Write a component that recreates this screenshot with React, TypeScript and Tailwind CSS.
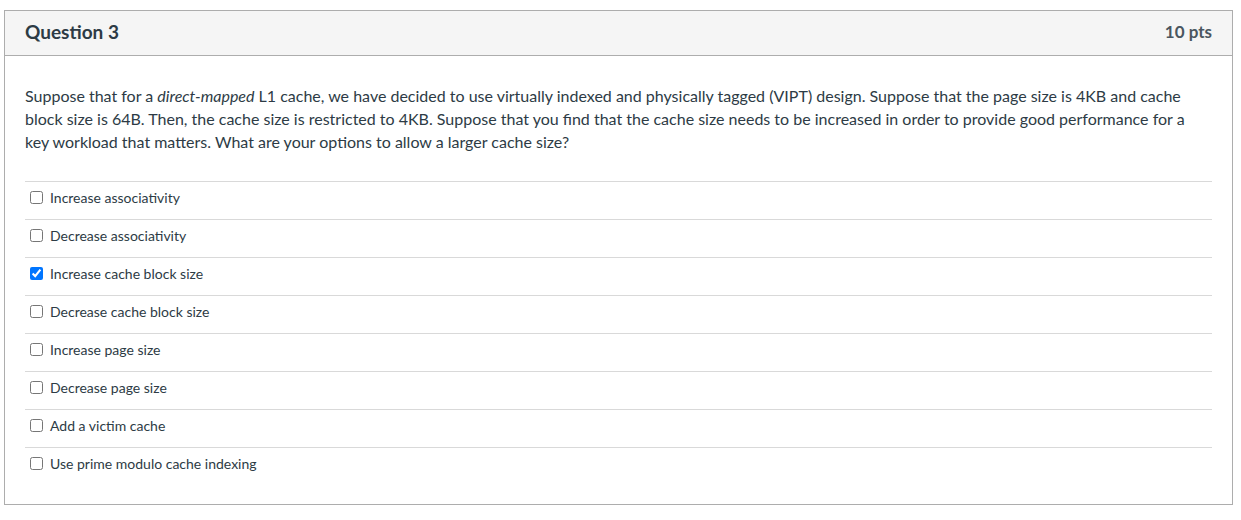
import React from "react";

const ANSWERS = [
  { label: "Increase associativity", checked: false },
  { label: "Decrease associativity", checked: false },
  { label: "Increase cache block size", checked: true },
  { label: "Decrease cache block size", checked: false },
  { label: "Increase page size", checked: false },
  { label: "Decrease page size", checked: false },
  { label: "Add a victim cache", checked: false },
  { label: "Use prime modulo cache indexing", checked: false },
];

export default function App() {
  return (
    <div className="bg-white min-h-[520px] pt-[10px] pl-[4px] font-['Lato','Noto_Sans',sans-serif] text-[#2d3b45]">
      <div className="w-[1229px] border border-[#adadad]">
        {/* Header */}
        <div className="h-[45px] bg-[#f5f5f5] border-b border-[#adadad] flex items-center justify-between pl-[20px] pr-[20px] pb-[2px]">
          <h2 className="text-[19px] font-bold">Question 3</h2>
          <span className="text-[17px] font-bold text-[#4a5660]">10 pts</span>
        </div>

        {/* Body */}
        <div className="px-[20px] pt-[28px] pb-[19px]">
          <p className="text-[16px] leading-[23px] pr-[8px]">
            Suppose that for a <em>direct-mapped</em> L1 cache, we have decided to use virtually
            indexed and physically tagged (VIPT) design. Suppose that the page size is 4KB and cache
            block size is 64B. Then, the cache size is restricted to 4KB. Suppose that you find that
            the cache size needs to be increased in order to provide good performance for a key
            workload that matters. What are your options to allow a larger cache size?
          </p>

          <div className="mt-[28px] w-[1187px]">
            {ANSWERS.map((a) => (
              <label
                key={a.label}
                className="h-[38px] border-t border-[#d9d9d9] flex items-center gap-[7px] pl-[5px] pb-[7px] text-[14px]"
              >
                <input
                  type="checkbox"
                  defaultChecked={a.checked}
                  className="w-[13px] h-[13px] m-0"
                />
                <span>{a.label}</span>
              </label>
            ))}
          </div>
        </div>
      </div>
    </div>
  );
}
